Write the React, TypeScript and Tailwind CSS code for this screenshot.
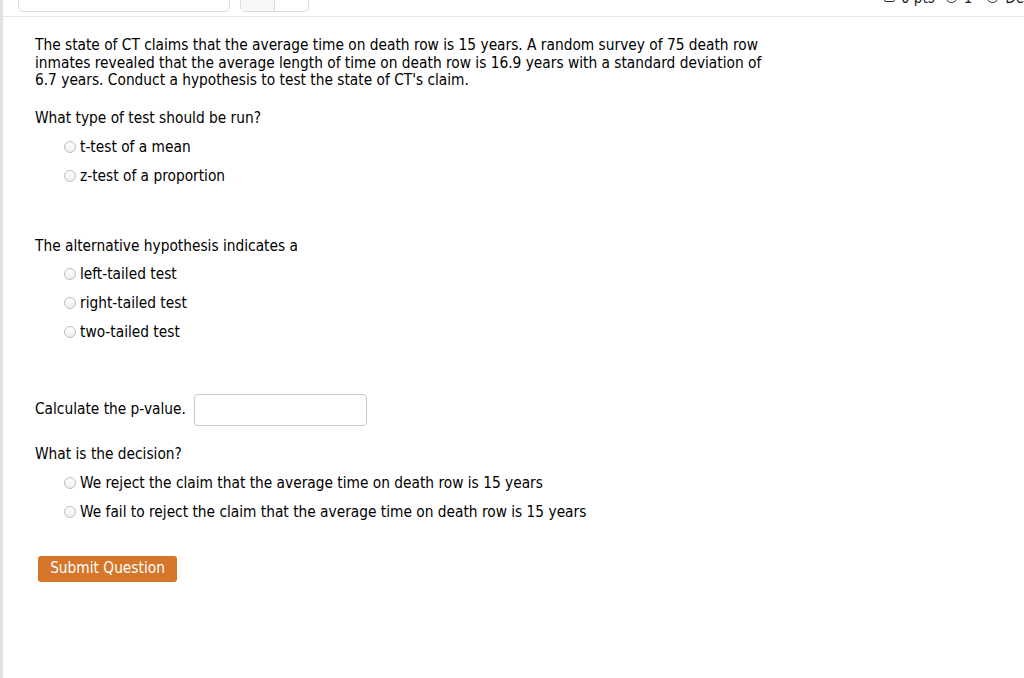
import React from 'react';

const font = { fontFamily: '"DejaVu Sans Condensed", "DejaVu Sans", sans-serif' };

function Radio({ label }: { label: string }) {
  return (
    <label className="flex items-center h-[29px] pl-[29px] text-[15.3px] text-black">
      <span className="w-[12px] h-[12px] rounded-full border border-[#bdbdbd] bg-gradient-to-b from-white to-[#ededed] mr-[4px] shrink-0" />
      <span>{label}</span>
    </label>
  );
}

export default function App() {
  return (
    <div className="relative w-[1024px] h-[678px] overflow-hidden bg-white" style={font}>
      {/* left gutter */}
      <div className="absolute left-0 top-0 bottom-0 w-[3px] bg-[#e2e2e2]" />

      {/* top bar, scrolled partly out of view */}
      <div className="flex items-end h-[17px] pl-[18px] border-b border-[#e6e6e6]">
        <div className="relative flex items-end h-[30px] -mt-[17px] mb-[4px]">
          <div className="w-[212px] h-[30px] border border-[#dcdcdc] rounded-[5px] bg-white flex items-start pl-[14px] text-[15px] leading-none text-[#222] overflow-hidden">
            <span className="-mt-[10px]">⊙ Question 10</span>
          </div>
          <div className="ml-[10px] w-[69px] h-[30px] border border-[#dcdcdc] rounded-[5px] flex">
            <div className="w-[34px] border-r border-[#dcdcdc] bg-[#f7f7f7]" />
            <div className="flex-1" />
          </div>
        </div>
        <div className="ml-auto flex items-start self-start -mt-[9px] gap-[6px] text-[15px] text-[#222] leading-none pr-0">
          <span className="w-[11px] h-[11px] border border-[#333] rounded-[2px] mt-[0px]" />
          <span>0 pts</span>
          <span className="ml-[4px] w-[13px] h-[13px] border-[1.5px] border-[#333] rounded-full -mt-[1px]" />
          <span>1</span>
          <span className="ml-[8px] w-[13px] h-[13px] border-[1.5px] border-[#333] rounded-full -mt-[1px]" />
          <span>De</span>
        </div>
      </div>

      <div className="pl-[35px] pr-[20px] pt-[20px] text-[15.3px] text-black">
        <p className="max-w-[740px] leading-[17.5px]">
          The state of CT claims that the average time on death row is 15 years. A random survey of 75 death row
          inmates revealed that the average length of time on death row is 16.9 years with a standard deviation of
          6.7 years. Conduct a hypothesis to test the state of CT's claim.
        </p>

        <div className="mt-[19px] leading-[18px]">What type of test should be run?</div>
        <div className="mt-[6px]">
          <Radio label="t-test of a mean" />
          <Radio label="z-test of a proportion" />
        </div>

        <div className="mt-[46px] leading-[18px]">The alternative hypothesis indicates a</div>
        <div className="mt-[5px]">
          <Radio label="left-tailed test" />
          <Radio label="right-tailed test" />
          <Radio label="two-tailed test" />
        </div>

        <div className="mt-[47px] flex items-center">
          <span>Calculate the p-value.</span>
          <input
            type="text"
            className="ml-[8px] w-[173px] h-[32px] border border-[#c8c8c8] rounded-[4px] bg-white outline-none"
          />
        </div>

        <div className="mt-[19px] leading-[18px]">What is the decision?</div>
        <div className="mt-[6px]">
          <Radio label="We reject the claim that the average time on death row is 15 years" />
          <Radio label="We fail to reject the claim that the average time on death row is 15 years" />
        </div>

        <button className="mt-[29px] ml-[3px] w-[139px] h-[26px] bg-[#d5762a] text-white text-[15.3px] rounded-[3px] flex items-center justify-center">
          Submit Question
        </button>
      </div>
    </div>
  );
}
